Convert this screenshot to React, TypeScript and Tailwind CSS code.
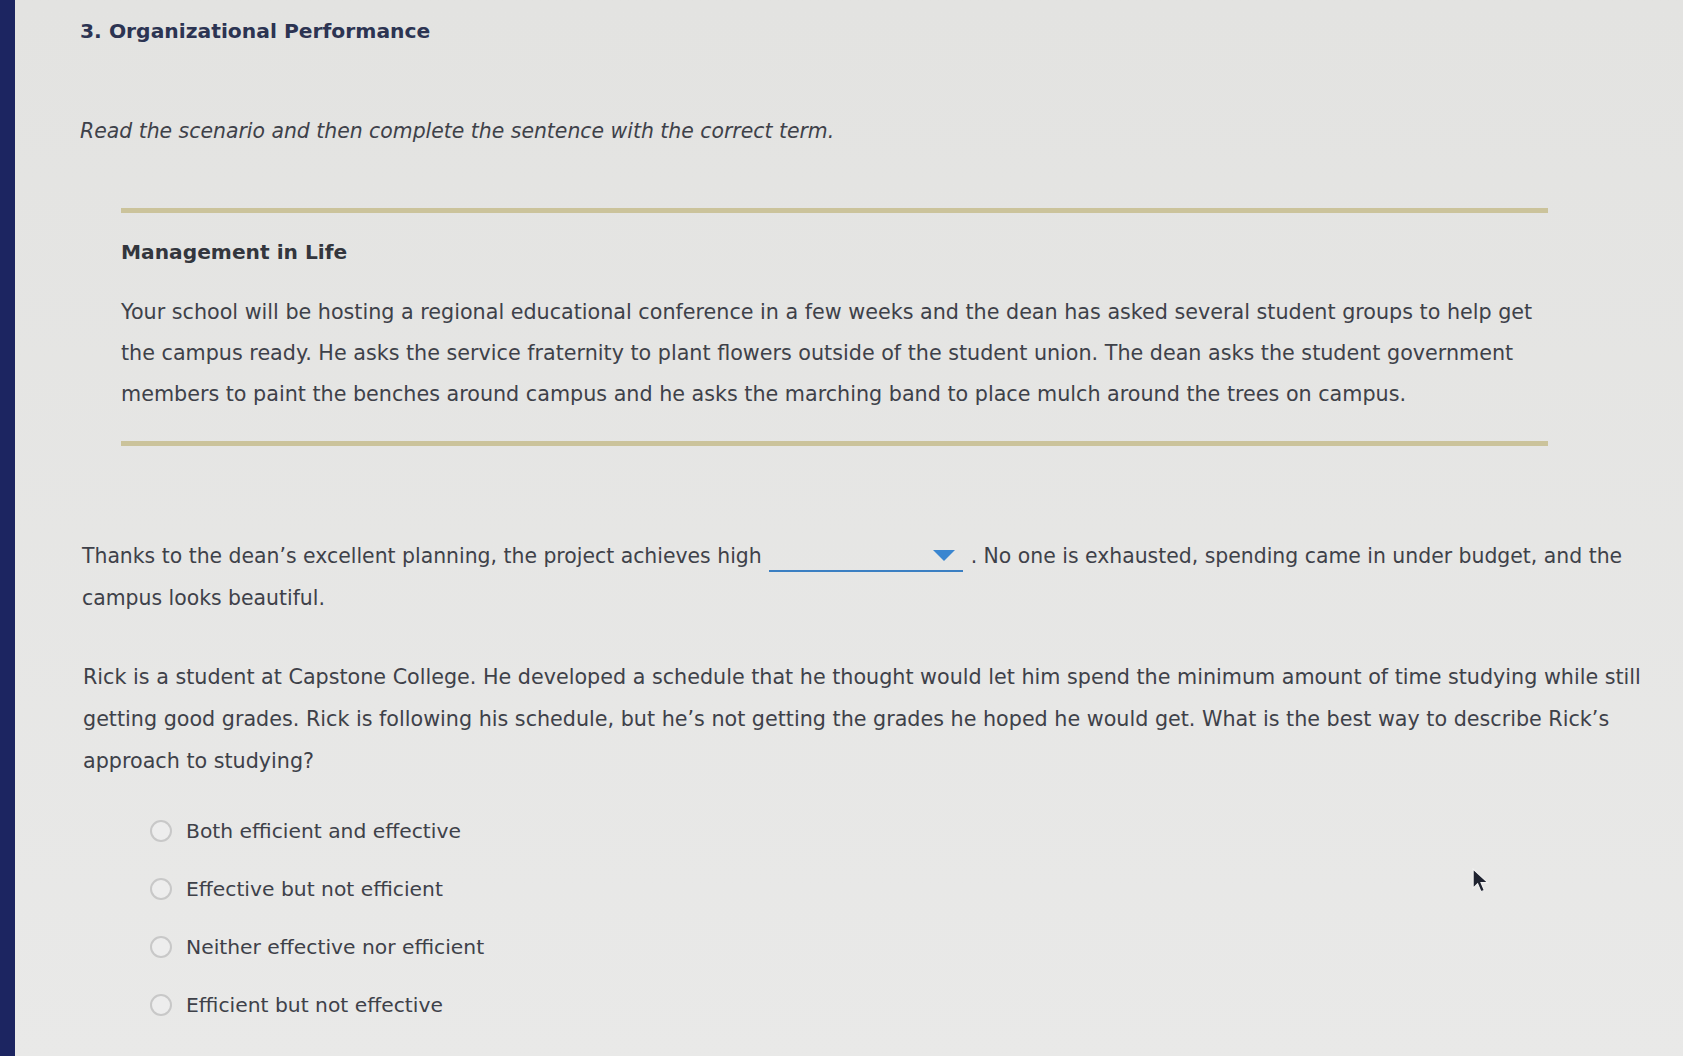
import { useState } from 'react';

const options = [
  'Both efficient and effective',
  'Effective but not efficient',
  'Neither effective nor efficient',
  'Efficient but not effective',
];

export default function App() {
  const [selected, setSelected] = useState<number | null>(null);

  return (
    <div
      className="relative flex w-[1683px] h-[1056px] overflow-hidden bg-gradient-to-b from-[#e3e3e1] to-[#e9e9e8] text-[#3e4149]"
      style={{ fontFamily: '"DejaVu Sans", Verdana, sans-serif' }}
    >
      {/* left navigation edge */}
      <div className="w-[15px] shrink-0 bg-[#1c2561]" />

      <div className="flex-1 pl-[65px] pt-[18px]">
        <h1 className="text-[20.3px] leading-[26px] font-bold text-[#2c3452]">3. Organizational Performance</h1>

        <p className="mt-[74px] text-[20.4px] leading-[26px] italic">
          Read the scenario and then complete the sentence with the correct term.
        </p>

        <div className="ml-[41px] w-[1427px] mt-[64px]">
          <div className="h-[5px] bg-[#cbc39b]" />
          <h2 className="mt-[26px] text-[20.2px] leading-[26px] font-bold text-[#33363d]">Management in Life</h2>
          <p className="mt-[27px] text-[20.7px] leading-[41px] whitespace-nowrap">
            Your school will be hosting a regional educational conference in a few weeks and the dean has asked several student groups to help get
            <br />
            the campus ready. He asks the service fraternity to plant flowers outside of the student union. The dean asks the student government
            <br />
            members to paint the benches around campus and he asks the marching band to place mulch around the trees on campus.
          </p>
          <div className="mt-[26px] h-[5px] bg-[#cbc39b]" />
        </div>

        <p className="mt-[89px] pl-[2px] text-[20.4px] leading-[42px] whitespace-nowrap">
          Thanks to the dean’s excellent planning, the project achieves high{' '}
          <span className="relative inline-block align-[-9px] w-[194px] h-[28px] mx-[1px] border-b-2 border-[#3b7fc2]">
            <svg width="24" height="13" viewBox="0 0 24 13" className="absolute right-[7px] bottom-[8px]">
              <path d="M1 1 L23 1 L12 12 Z" fill="#3a86d0" />
            </svg>
          </span>{' '}
          . No one is exhausted, spending came in under budget, and the
          <br />
          campus looks beautiful.
        </p>

        <p className="mt-[37px] pl-[3px] text-[20.7px] leading-[42px] whitespace-nowrap">
          Rick is a student at Capstone College. He developed a schedule that he thought would let him spend the minimum amount of time studying while still
          <br />
          getting good grades. Rick is following his schedule, but he’s not getting the grades he hoped he would get. What is the best way to describe Rick’s
          <br />
          approach to studying?
        </p>

        <div className="mt-[34px] ml-[70px] flex flex-col gap-[28px]">
          {options.map((o, i) => (
            <label key={o} className="flex items-center gap-[14px] h-[30px] text-[20.3px] cursor-pointer" onClick={() => setSelected(i)}>
              <span className="flex items-center justify-center w-[22px] h-[22px] rounded-full border-2 border-[#c8c8c8] bg-[#ededed]">
                {selected === i && <span className="w-[9px] h-[9px] rounded-full bg-[#3a86d0]" />}
              </span>
              {o}
            </label>
          ))}
        </div>
      </div>

      {/* mouse pointer */}
      <svg className="absolute left-[1472px] top-[868px]" width="18" height="27" viewBox="0 0 16 24">
        <path d="M1 1 L1 18 L5 14 L8 21 L11 20 L8 13 L14 13 Z" fill="#1f2330" stroke="#f2f2f2" strokeWidth="1" />
      </svg>
    </div>
  );
}
